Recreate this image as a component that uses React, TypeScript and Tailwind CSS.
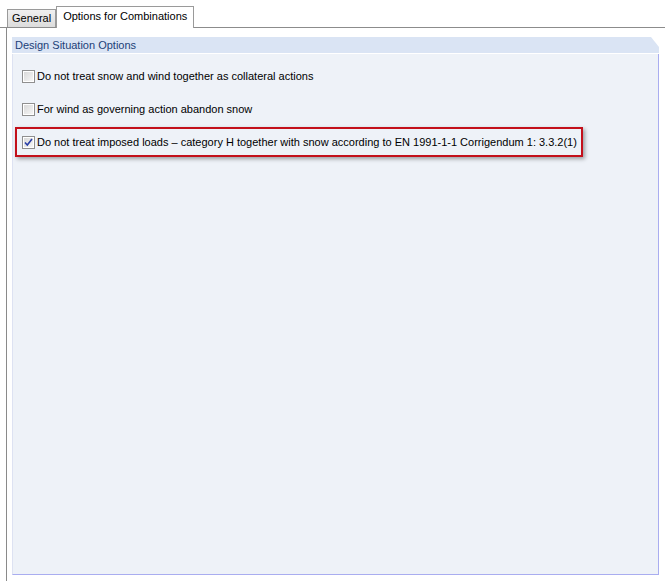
import React from 'react';

function Box({ checked = false }: { checked?: boolean }) {
  return (
    <span className="w-[13px] h-[13px] shrink-0 border border-[#8f8f8f] bg-white p-px">
      <span className="flex w-full h-full items-center justify-center bg-gradient-to-br from-[#d9d9d9] to-[#f6f6f6]">
        {checked && (
          <svg width="9" height="9" viewBox="0 0 9 9">
            <path d="M1 4.5 L3.3 7 L8 1" fill="none" stroke="#2a3fa8" strokeWidth="1.6" />
          </svg>
        )}
      </span>
    </span>
  );
}

function Option({ label, checked }: { label: string; checked?: boolean }) {
  return (
    <label className="flex items-center gap-[2px] text-[11px] text-black leading-none">
      <Box checked={checked} />
      <span>{label}</span>
    </label>
  );
}

export default function App() {
  return (
    <div className="w-[665px] h-[581px] bg-white flex flex-col font-['Liberation_Sans',Arial,sans-serif] select-none">
      <div className="flex items-end pl-[7px] pt-[6px] border-b border-[#8c8c8c] h-[28px]">
        <div className="h-[18px] px-[4px] flex items-center border border-b-0 border-[#9a9a9a] bg-gradient-to-b from-[#f0f0f0] to-[#dcdcdc] text-[11px]">
          General
        </div>
        <div className="h-[22px] px-[6px] flex items-center border border-b-0 border-[#9a9a9a] bg-white text-[11px] -mb-px pb-[3px]">
          Options for Combinations
        </div>
      </div>
      <div className="flex-1 flex ml-[6px] border-l border-[#8a8a8a] pt-[9px] pl-[5px] pr-[6px] pb-[6px]">
        <div className="flex-1 flex flex-col">
          <div className="relative h-[16px] bg-[#dae4f4] flex items-center pl-[3px] text-[11px] text-[#1c3f78] [clip-path:polygon(0_0,calc(100%-8px)_0,100%_10px,100%_100%,0_100%)]">
            Design Situation Options
          </div>
          <div className="h-px bg-white" />
          <div className="flex-1 bg-[#eef2f8] border-r border-b border-[#a9adf0] border-l border-l-[#dde2f2] flex flex-col pt-[16px] pl-[9px] pr-[75px]">
            <Option label="Do not treat snow and wind together as collateral actions" />
            <div className="mt-[20px]">
              <Option label="For wind as governing action abandon snow" />
            </div>
            <div className="mt-[11px] -ml-[7px] border-2 border-[#c3101b] shadow-[2px_2px_4px_rgba(0,0,0,0.35)] h-[30px] flex items-center pl-[5px]">
              <Option
                checked
                label="Do not treat imposed loads – category H together with snow according to EN 1991-1-1 Corrigendum 1: 3.3.2(1)"
              />
            </div>
          </div>
        </div>
      </div>
    </div>
  );
}
